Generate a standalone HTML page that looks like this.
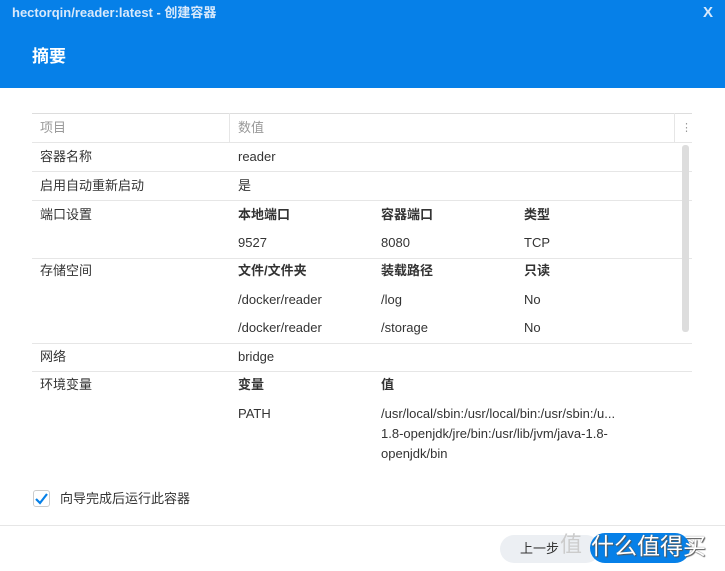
<!DOCTYPE html>
<html><head><meta charset="utf-8"><style>
*{margin:0;padding:0;box-sizing:border-box}
body{width:725px;height:571px;overflow:hidden;background:#fff;font-family:"Liberation Sans","Noto Sans CJK SC",sans-serif;font-size:13px;line-height:16px;color:#333;position:relative}
.hdr{position:absolute;left:0;top:0;width:725px;height:88px;background:#0680e8;color:#fff}
.t1{position:absolute;left:12px;top:5px;font-size:13px;font-weight:bold;color:#d8e9fb}
.x{position:absolute;right:12px;top:5px;font-size:15px;font-weight:bold;color:#d8e9fb}
.t2{position:absolute;left:32px;top:47px;font-size:17px;line-height:20px;font-weight:bold}
.a{position:absolute;white-space:nowrap}
.l{position:absolute;left:32px;width:660px;height:1px;background:#e6e6e6}
b{font-weight:bold;color:#333}
</style></head><body>
<div class="hdr"><div class="t1">hectorqin/reader:latest - 创建容器</div><div class="x">X</div><div class="t2">摘要</div></div>
<div class="l" style="top:113px;background:#ddd"></div>
<div class="l" style="top:142px"></div>
<div class="l" style="top:171px"></div>
<div class="l" style="top:200px"></div>
<div class="l" style="top:258px"></div>
<div class="l" style="top:343px"></div>
<div class="l" style="top:371px"></div>
<div class="a" style="left:229px;top:113px;width:1px;height:29px;background:#e6e6e6"></div>
<div class="a" style="left:674px;top:113px;width:1px;height:29px;background:#e6e6e6"></div>
<div class="a" style="left:681px;top:120px;color:#999;font-size:11px">⋮</div>
<div class="a" style="left:682px;top:145px;width:7px;height:187px;background:#ddd;border-radius:3px"></div>
<div class="a" style="left:40px;top:120px;color:#999">项目</div>
<div class="a" style="left:238px;top:120px;color:#999">数值</div>
<div class="a" style="left:40px;top:149px">容器名称</div><div class="a" style="left:238px;top:149px">reader</div>
<div class="a" style="left:40px;top:178px">启用自动重新启动</div><div class="a" style="left:238px;top:178px">是</div>
<div class="a" style="left:40px;top:207px">端口设置</div>
<div class="a" style="left:238px;top:207px"><b>本地端口</b></div><div class="a" style="left:381px;top:207px"><b>容器端口</b></div><div class="a" style="left:524px;top:207px"><b>类型</b></div>
<div class="a" style="left:238px;top:235px">9527</div><div class="a" style="left:381px;top:235px">8080</div><div class="a" style="left:524px;top:235px">TCP</div>
<div class="a" style="left:40px;top:263px">存储空间</div>
<div class="a" style="left:238px;top:263px"><b>文件/文件夹</b></div><div class="a" style="left:381px;top:263px"><b>装载路径</b></div><div class="a" style="left:524px;top:263px"><b>只读</b></div>
<div class="a" style="left:238px;top:292px">/docker/reader</div><div class="a" style="left:381px;top:292px">/log</div><div class="a" style="left:524px;top:292px">No</div>
<div class="a" style="left:238px;top:320px">/docker/reader</div><div class="a" style="left:381px;top:320px">/storage</div><div class="a" style="left:524px;top:320px">No</div>
<div class="a" style="left:40px;top:349px">网络</div><div class="a" style="left:238px;top:349px">bridge</div>
<div class="a" style="left:40px;top:377px">环境变量</div>
<div class="a" style="left:238px;top:377px"><b>变量</b></div><div class="a" style="left:381px;top:377px"><b>值</b></div>
<div class="a" style="left:238px;top:406px">PATH</div>
<div class="a" style="left:381px;top:404px;line-height:20px">/usr/local/sbin:/usr/local/bin:/usr/sbin:/u...<br>1.8-openjdk/jre/bin:/usr/lib/jvm/java-1.8-<br>openjdk/bin</div>
<div class="a" style="left:33px;top:490px;width:17px;height:17px;border:1px solid #ccc;border-radius:3px"><svg width="15" height="15" viewBox="0 0 15 15"><path d="M2 8 L6 12 L13 3" stroke="#0680e8" stroke-width="2.2" fill="none"/></svg></div>
<div class="a" style="left:60px;top:491px">向导完成后运行此容器</div>
<div class="a" style="left:0;top:525px;width:725px;height:1px;background:#e6e6e6"></div>
<div class="a" style="left:500px;top:535px;width:100px;height:28px;background:#eceff3;border-radius:14px"></div>
<div class="a" style="left:520px;top:541px">上一步</div>
<div class="a" style="left:560px;top:530px;font-size:22px;line-height:30px;color:#ccc">值</div>
<div class="a" style="left:590px;top:533px;width:100px;height:30px;background:#0680e8;border-radius:15px"></div>
<div class="a" style="left:591px;top:531px;width:130px;font-size:23px;line-height:30px;color:#fff;text-shadow:0 0 1px #555,1px 1px 1px #555">什么值得买</div>
</body></html>
